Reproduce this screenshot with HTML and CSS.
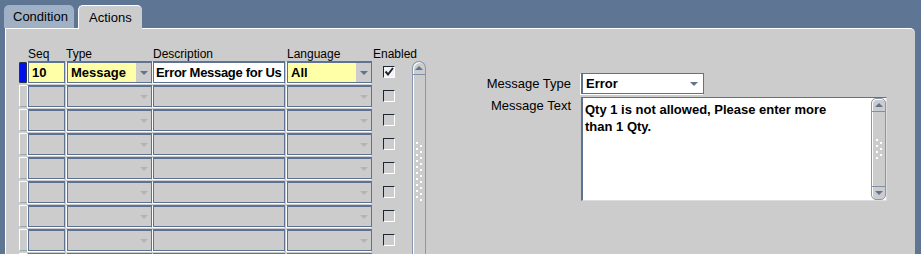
FILE: index.html
```html
<!DOCTYPE html>
<html lang="en">
<head>
    <meta charset="UTF-8">
    <title>Actions</title>
    <link rel="stylesheet" href="styles.css">
</head>
<body>
    <div class="tabs">
        <div class="tab">Condition</div>
        <div class="tab active">Actions</div>
    </div>
    <div class="panel">
        <div class="block">
            <div class="head">
                <span class="c-ind"></span>
                <span class="c-seq">Seq</span>
                <span class="c-type">Type</span>
                <span class="c-desc">Description</span>
                <span class="c-lang">Language</span>
                <span class="c-en">Enabled</span>
            </div>
            <div class="body">
                <div class="rows" id="rows">
                    <div class="row">
                        <span class="ind current"></span>
                        <span class="field c-seq req">10</span>
                        <span class="field c-type combo req"><span class="val">Message</span><span class="btn"><i class="arrow"></i></span></span>
                        <span class="field c-desc white tight">Error Message for Us</span>
                        <span class="field c-lang combo req"><span class="val">All</span><span class="btn"><i class="arrow"></i></span></span>
                        <span class="c-en"><span class="check on"><svg width="10" height="10" viewBox="0 0 10 10"><polyline points="1.5,4.5 4,7.5 9,1" fill="none" stroke="#1e2633" stroke-width="2"/></svg></span></span>
                    </div>
                </div>
                <div class="vscroll">
                    <div class="sbtn up"><i class="arrow-up"></i></div>
                    <div class="grip tall"></div>
                </div>
            </div>
        </div>
        <div class="form">
            <label class="lbl">Message Type</label>
            <span class="field combo white typefield"><span class="val">Error</span><span class="btn"><i class="arrow"></i></span></span>
            <label class="lbl top">Message Text</label>
            <div class="textarea">
                <div class="text">Qty 1 is not allowed, Please enter more<br>than 1 Qty.</div>
                <div class="tscroll">
                    <div class="sbtn up"><i class="arrow-up"></i></div>
                    <div class="grip"></div>
                    <div class="sbtn down"><i class="arrow"></i></div>
                </div>
            </div>
        </div>
    </div>
    <script>
        // empty rows below the current record
        var rows = document.getElementById('rows');
        for (var i = 0; i < 8; i++) {
            var r = document.createElement('div');
            r.className = 'row';
            r.innerHTML =
                '<span class="ind"></span>' +
                '<span class="field c-seq"></span>' +
                '<span class="field c-type combo"><span class="val"></span><span class="btn"><i class="arrow off"></i></span></span>' +
                '<span class="field c-desc"></span>' +
                '<span class="field c-lang combo"><span class="val"></span><span class="btn"><i class="arrow off"></i></span></span>' +
                '<span class="c-en"><span class="check"></span></span>';
            rows.appendChild(r);
        }
    </script>
</body>
</html>
```

FILE: styles.css
```css
body {
    margin: 0;
    height: 254px;
    overflow: hidden;
    background: #5f7594;
    font-family: "Liberation Sans", Arial, sans-serif;
    font-size: 12px;
    color: #000;
}
.tabs {
    display: flex;
    align-items: flex-end;
    gap: 4px;
    height: 23px;
    padding: 5px 0 0 4px;
}
.tab {
    width: 70px;
    height: 23px;
    line-height: 24px;
    padding-left: 9px;
    box-sizing: border-box;
    background: #a0b0c5;
    border-radius: 5px 5px 0 0;
    font-size: 13px;
}
.tab.active {
    width: 64px;
    height: 24px;
    margin-bottom: -1px;
    padding-left: 10px;
    background: #cccccc;
    border-top: 1px solid #fff;
    border-left: 1px solid #fff;
    position: relative;
    z-index: 1;
}
.panel {
    display: flex;
    align-items: flex-start;
    margin: 0 6px 0 5px;
    height: 240px;
    background: #cccccc;
    border-top: 1px solid #fff;
    border-left: 1px solid #fff;
    border-radius: 0 5px 0 0;
}
.block {
    margin: 17px 0 0 13px;
}
.head {
    display: flex;
    height: 15px;
    padding-top: 2px;
    box-sizing: border-box;
    line-height: 13px;
    white-space: nowrap;
}
.head span { display: block; }
.c-ind { width: 8px; margin-right: 1px; flex: none; }
.c-seq { width: 37px; margin-right: 2px; flex: none; }
.c-type { width: 85px; margin-right: 1px; flex: none; }
.c-desc { width: 132px; margin-right: 2px; flex: none; }
.c-lang { width: 85px; margin-right: 1px; flex: none; }
.c-en { width: 39px; flex: none; }
.head .c-type { text-indent: -1px; }
.body {
    display: flex;
}
.rows {
    display: flex;
    flex-direction: column;
    gap: 2px;
}
.row {
    display: flex;
    height: 22px;
}
.ind {
    width: 8px;
    margin-right: 1px;
    box-sizing: border-box;
    border-top: 1px solid #fff;
    border-left: 1px solid #fff;
    border-bottom: 1px solid #9aa;
    flex: none;
}
.ind.current {
    background: #0010ee;
    border: 1px solid #2a3448;
    border-radius: 1px;
    margin-top: 1px;
    height: 21px;
}
.field {
    display: flex;
    align-items: center;
    box-sizing: border-box;
    height: 22px;
    padding-left: 3px;
    border: 1px solid #5e7291;
    border-top-width: 2px;
    box-shadow: -1px 1px 0 #fff;
    background: #cccccc;
    font-size: 13px;
    font-weight: bold;
    white-space: nowrap;
    overflow: hidden;
}
.field.tight {
    padding-left: 2px;
    letter-spacing: -0.3px;
}
.field.req { background: #ffffa8; }
.field.white { background: #fff; }
.combo { padding-left: 0; }
.combo .val {
    flex: 1;
    height: 100%;
    display: flex;
    align-items: center;
    padding-left: 3px;
}
.combo .btn {
    width: 15px;
    height: 100%;
    background: #cccccc;
    display: flex;
    align-items: center;
    justify-content: center;
    flex: none;
}
.field.white .btn { background: #fff; }
.arrow {
    display: block;
    width: 0;
    height: 0;
    border-left: 4px solid transparent;
    border-right: 4px solid transparent;
    border-top: 4px solid #5f7393;
}
.arrow.off { border-top-color: #b4b4b4; }
.arrow-up {
    display: block;
    width: 0;
    height: 0;
    border-left: 4px solid transparent;
    border-right: 4px solid transparent;
    border-bottom: 4px solid #5f7393;
}
.row .c-en {
    display: flex;
    align-items: center;
    padding-left: 10px;
    box-sizing: border-box;
}
.check {
    display: flex;
    align-items: center;
    justify-content: center;
    width: 12px;
    height: 12px;
    box-sizing: border-box;
    border-top: 1px solid #1e2633;
    border-left: 1px solid #1e2633;
    border-right: 1px solid #fff;
    border-bottom: 1px solid #fff;
}
.check.on { background: #f4f4f4; }
.vscroll {
    width: 14px;
    height: 200px;
    box-sizing: border-box;
    border: 1px solid #8797b0;
    border-bottom: none;
    border-radius: 7px 7px 0 0;
    box-shadow: inset 1px 1px 0 #fff;
}
.sbtn {
    height: 13px;
    display: flex;
    align-items: center;
    justify-content: center;
    box-sizing: border-box;
}
.sbtn.up { border-bottom: 1px solid #7d8fa9; }
.sbtn.down { border-top: 1px solid #7d8fa9; }
.grip {
    height: 60px;
    margin: 67px auto 0;
    width: 6px;
    background-image:
        radial-gradient(circle at 1px 1px, #fff 1px, transparent 1.2px),
        radial-gradient(circle at 5px 4px, #fff 1px, transparent 1.2px);
    background-size: 6px 6px;
}
.form {
    display: grid;
    grid-template-columns: 120px auto;
    column-gap: 10px;
    row-gap: 3px;
    margin: 44px 0 0 25px;
}
.lbl {
    text-align: right;
    font-size: 13px;
    line-height: 21px;
    white-space: nowrap;
}
.lbl.top { line-height: 18px; }
.typefield {
    width: 123px;
    height: 21px;
    border-top-width: 1px;
    border-left-width: 2px;
}
.typefield .btn { width: 18px; }
.textarea {
    display: flex;
    width: 306px;
    height: 104px;
    box-sizing: border-box;
    background: #fff;
    border: 1px solid #5e7291;
    border-left-width: 2px;
    border-right-color: #ddd;
    border-bottom-color: #ddd;
}
.text {
    flex: 1;
    padding: 3px 0 0 2px;
    font-size: 13px;
    font-weight: bold;
    line-height: 17px;
}
.tscroll {
    width: 15px;
    display: flex;
    flex-direction: column;
    box-sizing: border-box;
    background: #cccccc;
    border: 1px solid #8797b0;
    border-radius: 5px;
    box-shadow: inset 1px 1px 0 #fff;
}
.tscroll .grip {
    height: 20px;
    margin: auto;
}
```
